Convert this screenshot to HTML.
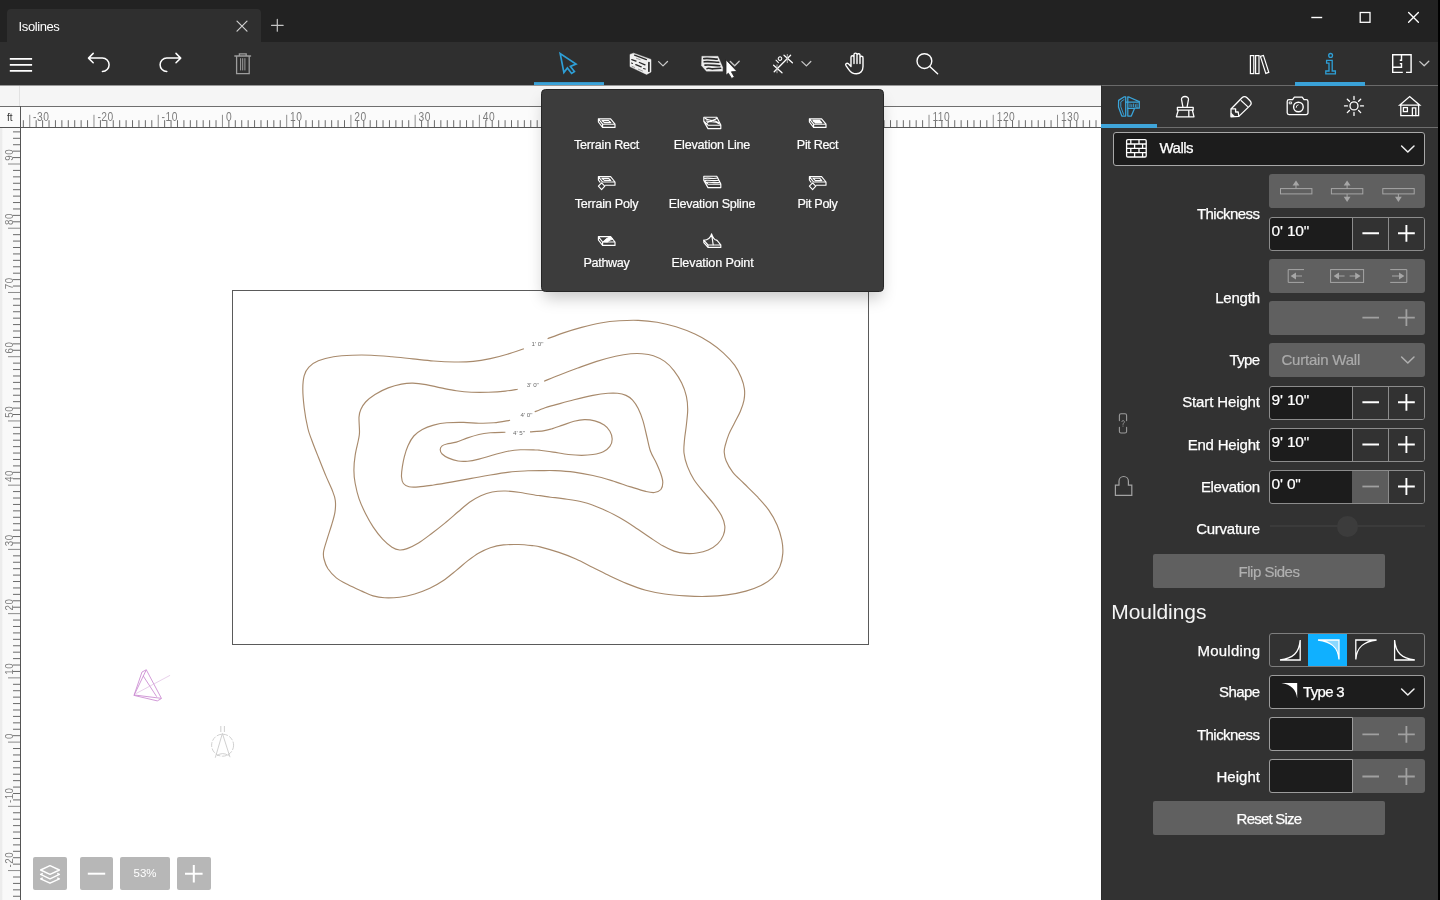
<!DOCTYPE html>
<html lang="en">
<head>
<meta charset="utf-8">
<title>Isolines</title>
<style>
*{box-sizing:border-box;margin:0;padding:0}
html,body{width:1440px;height:900px;overflow:hidden;background:#fff}
body{font-family:"Liberation Sans",sans-serif;color:#fff;position:relative;-webkit-font-smoothing:antialiased}
.abs{position:absolute}
svg{position:absolute;overflow:visible}
#titlebar{left:0;top:0;width:1440px;height:42px;background:#222222}
#tab{left:7px;top:9px;width:254px;height:34px;background:#2f2f2f;border-radius:4px 4px 0 0}
#toolbar{left:0;top:42px;width:1440px;height:43px;background:#2f2f2f}
.ico{stroke:#fff;fill:none;stroke-width:1.4;stroke-linecap:round;stroke-linejoin:round}
.icob{stroke:#2e9fd6;fill:none;stroke-width:1.4;stroke-linecap:round;stroke-linejoin:round}
#canvas{left:0;top:85px;width:1101px;height:815px;background:#fff}
#topband{left:0;top:85px;width:1101px;height:22px;border-top:1px solid #999;background:#f5f5f5;border-bottom:1px solid #6e6e6e}
#hruler{left:0;top:107px;width:1101px;height:21px;background:#fbfbfb;border-bottom:1px solid #555}
#vruler{left:0;top:85px;width:21px;height:815px;background:linear-gradient(to right,#ececec 0,#ececec 1.5px,#f9f9f9 3px);border-right:1px solid #555}
#panel{left:1101px;top:85px;width:339px;height:815px;background:#323232;border-left:1px solid #2c2c2c;border-top:1px solid #6a6a6a}
.lbl{position:absolute;right:180px;font-size:15px;line-height:18px;color:#fff;white-space:nowrap;text-align:right;-webkit-text-stroke:.25px #fff}
.fld{position:absolute;left:1269px;width:156px;height:34px;border:1px solid #8c8c8c;border-radius:3px;background:#1c1c1c;overflow:hidden}
.fld .val{position:absolute;left:1.6px;top:4px;font-size:15.5px;line-height:18px;color:#fff;letter-spacing:-.2px;-webkit-text-stroke:.2px #fff}
.fld .mb{position:absolute;top:0;width:36px;height:32px;background:#323232;border-left:1px solid #8c8c8c}
.dis{position:absolute;left:1269px;width:156px;height:34px;border-radius:3px;background:#606060}
.btn{position:absolute;left:1153px;width:232px;height:34px;border-radius:2px;background:#606060;font-size:15px;line-height:34px;text-align:center;padding-top:.6px}
.pm{stroke:#fff;stroke-width:1.9;fill:none}
.pmd{stroke:#a0a0a0;stroke-width:1.8;fill:none}
#popup{left:540.6px;top:89px;width:343.6px;height:203px;background:#3c3c3c;border-radius:4.5px;border:1px solid #262626;box-shadow:0 9px 16px -3px rgba(0,0,0,.22)}
.pi{position:absolute;width:120px;text-align:center;font-size:13px;line-height:16px;color:#fff;white-space:nowrap;-webkit-text-stroke:.2px #fff}
.zb{position:absolute;top:857px;height:33.4px;background:#b7b7b7;border-radius:2px}
</style>
</head>
<body>
<div id="root" style="position:absolute;left:0;top:0;width:1440px;height:900px;will-change:transform">
<!-- ===== title bar + toolbar ===== -->
<div id="titlebar" class="abs"></div>
<div id="tab" class="abs"></div>
<div id="toolbar" class="abs"></div>
<div class="abs" style="left:18.6px;top:19px;font-size:13px;line-height:16px;color:#fff;letter-spacing:-0.4px">Isolines</div>
<svg width="1440" height="90" style="left:0;top:0" viewBox="0 0 1440 90">
  <!-- tab close / plus -->
  <path class="ico" style="stroke-width:1.2;stroke:#d0d0d0" d="M237 21.2 L247 31.2 M247 21.2 L237 31.2"/>
  <path class="ico" style="stroke-width:1.2;stroke:#c4c4c4" d="M271.5 25.3 H283.2 M277.3 19.4 V31.2"/>
  <!-- window controls -->
  <path class="ico" style="stroke-width:1.4;stroke-linecap:butt" d="M1311.3 17.5 H1322.2"/>
  <rect class="ico" style="stroke-width:1.3;stroke-linejoin:miter" x="1360.2" y="12.5" width="9.8" height="9.8"/>
  <path class="ico" style="stroke-width:1.3" d="M1408.6 12.5 L1418.4 22.3 M1418.4 12.5 L1408.6 22.3"/>
  <!-- hamburger -->
  <path class="ico" style="stroke-width:1.8;stroke-linecap:butt" d="M9.8 58.9 H32.1 M9.8 64.95 H32.1 M9.8 70.95 H32.1"/>
  <!-- undo -->
  <path class="ico" style="stroke-width:1.5" d="M93.2 53.4 L88.5 58.1 L93.2 62.8 M88.8 58.1 H102.4 A6.7 6.7 0 0 1 102.4 71.5"/>
  <!-- redo -->
  <path class="ico" style="stroke-width:1.5" d="M176 53.4 L180.7 58.1 L176 62.8 M180.4 58.1 H166.8 A6.7 6.7 0 0 0 166.8 71.5"/>
  <!-- trash -->
  <g class="ico" style="stroke:#9d9d9d;stroke-width:1.3;stroke-linejoin:miter">
    <path d="M234.8 56 H250.6 M239.4 55.8 V53.8 H246.2 V55.8 M236.6 56.2 V73.6 H249.2 V56.2"/>
    <path d="M240.6 58.6 V70 M242.7 58.6 V70 M244.9 58.6 V70" style="stroke-width:1"/>
  </g>
  <!-- pointer (selected) -->
  <path class="icob" style="stroke-width:1.7;stroke-linejoin:miter" d="M560.2 53.6 L563.9 72.6 L567.4 68 L571.6 73.4 L574.4 71.6 L570.4 66.4 L576 64 Z"/>
  <rect x="534" y="82.1" width="70" height="3.4" fill="#3aa2d8"/>
  <!-- wall tool -->
  <path d="M630 54.4 L633.6 53.2 L651 59.4 V72 L646.6 74.4 L630 66.6 Z" fill="#efefef" stroke="#efefef" stroke-width="0.5" stroke-linejoin="round"/>
  <g fill="none" stroke="#2a2a2a" stroke-width="1.35" stroke-linecap="round">
    <path d="M634.6 55.2 L646.4 59.6"/>
    <path d="M648.9 62.6 V71.2" stroke-width="1.7"/>
    <path d="M631.8 59.6 L636 61.1 M639.4 62.5 L645 64.8 M635.8 64.7 L641.2 66.8"/>
    <path d="M631.5 63 L632.6 63.4 M643.6 68.5 L645.2 69.1" stroke-width="1.1"/>
    <path d="M636.4 58.3 L640.2 59.7 M632 66.3 L634.6 67.4 M638.4 69.2 L642.6 71" stroke="#8a8a8a" stroke-width="0.8"/>
  </g>
  <path class="ico" style="stroke:#c8c8c8;stroke-width:1.3" d="M658.6 61.6 L663 65.9 L667.5 61.5"/>
  <!-- terrain tool -->
  <path d="M701.8 56.2 H718 L722.7 67.2 V71.2 H706.4 L701.4 65.6 Z" fill="#ededed" stroke="#ededed" stroke-width="0.3" stroke-linejoin="round"/>
  <g fill="none" stroke="#2a2a2a" stroke-width="1.65" stroke-linecap="round">
    <path d="M703.8 58.6 C708 58 713 58.8 717.2 59.1"/>
    <path d="M704.2 61.8 C709 61.1 714 62.1 718.8 62.3"/>
    <path d="M705 65.1 C710 64.5 715 65.6 719.8 65.7"/>
    <path d="M707 68.6 C709 67.5 711 69.4 713.4 68.8 L720.6 68.3"/>
  </g>
  <path class="ico" style="stroke:#c8c8c8;stroke-width:1.3" d="M730.3 61.5 L734.7 65.8 L739.2 61.3"/>
  <!-- dimension tool -->
  <g class="ico" style="stroke-width:1.25">
    <path d="M774.2 71.8 L790.6 55.2"/>
    <path d="M773.6 65.2 L782 72.8 M784 55.2 L792.4 62.8"/>
    <path d="M777 64.8 V72.8 M787.3 54.4 V62.6" style="stroke:#bdbdbd;stroke-width:0.9"/>
    <path d="M776 60.2 L778.4 62.6 M778.8 57.4 A1.7 1.7 0 1 1 781.2 59.8 A1.7 1.7 0 1 1 778.8 57.4" style="stroke-width:1.05"/>
  </g>
  <path class="ico" style="stroke:#c8c8c8;stroke-width:1.3" d="M801.9 61.6 L806.4 65.9 L810.8 61.5"/>
  <!-- hand -->
  <path class="ico" style="stroke-width:1.4" d="M851 66.4 V57.2 A1.5 1.5 0 0 1 854 57.2 V54.6 A1.5 1.5 0 0 1 857 54.6 V55 A1.5 1.5 0 0 1 860 55.4 V57.6 A1.5 1.5 0 0 1 863 58 V66.6 C863 71.4 860 73.8 856.4 73.8 C852.8 73.8 850.6 72.2 848.8 69.6 L846 65.6 C845 64 846.8 62.4 848.4 63.8 L851 66.4 M854 57 V63.6 M857 55 V63.6 M860 55.6 V63.6"/>
  <!-- search -->
  <circle class="ico" cx="924.4" cy="61.1" r="7.4"/>
  <path class="ico" d="M929.8 66.6 L937.6 73.8"/>
  <!-- library -->
  <g class="ico" style="stroke-width:1.2;stroke-linejoin:miter">
    <rect x="1250.4" y="55.6" width="3.4" height="18"/>
    <rect x="1255.6" y="55.6" width="3.4" height="18"/>
    <path d="M1260.4 56.4 L1263.4 55.4 L1268.8 72.4 L1265.8 73.4 Z"/>
  </g>
  <!-- info (selected) -->
  <g class="icob" style="stroke-width:1.3;stroke-linejoin:miter">
    <circle cx="1330.6" cy="55.4" r="1.9"/>
    <path d="M1326.6 60.4 H1332.2 V71 H1335.4 V73.8 H1325.8 V71 H1329 V63.2 H1326.6 Z"/>
  </g>
  <rect x="1295" y="82" width="70" height="3.4" fill="#3aa2d8"/>
  <!-- floor plan -->
  <g class="ico" style="stroke-width:1.4;stroke-linejoin:miter;stroke-linecap:butt">
    <path d="M1402.8 72.4 H1392.7 V54.8 H1411.1 V72.4 H1406"/>
    <path d="M1392.7 67.3 H1401.5 V63.6 H1399.8 M1401.5 54.8 V60.2 H1399.8"/>
  </g>
  <path class="ico" style="stroke:#c8c8c8;stroke-width:1.3" d="M1419.8 61.6 L1424.2 65.8 L1428.8 61.3"/>
</svg>
<!-- ===== canvas + rulers ===== -->
<div id="canvas" class="abs"></div>
<div id="vruler" class="abs"></div>
<div id="topband" class="abs"></div>
<div id="hruler" class="abs"></div>
<div class="abs" style="left:0;top:86px;width:20px;height:20px;background:#f5f5f5;border-right:1px solid #e2e2e2"></div>
<div class="abs" style="left:20px;top:106px;width:1px;height:794px;background:#555"></div>
<div class="abs" style="left:7px;top:111.5px;font-size:10px;line-height:12px;color:#333">ft</div>
<svg width="1101" height="815" style="left:0;top:85px" viewBox="0 85 1101 815">
<path d="M29.75 114.8V127M93.98 114.8V127M158.22 114.8V127M222.45 114.8V127M286.69 114.8V127M350.92 114.8V127M415.15 114.8V127M479.39 114.8V127M543.62 114.8V127M607.86 114.8V127M672.09 114.8V127M736.32 114.8V127M800.56 114.8V127M864.79 114.8V127M929.03 114.8V127M993.26 114.8V127M1057.49 114.8V127" stroke="#8e8e8e" stroke-width="1" fill="none"/>
<path d="M23.33 120.2V127M36.17 120.2V127M42.60 120.2V127M49.02 120.2V127M55.44 120.2V127M61.87 120.2V127M68.29 120.2V127M74.71 120.2V127M81.14 120.2V127M87.56 120.2V127M100.41 120.2V127M106.83 120.2V127M113.25 120.2V127M119.68 120.2V127M126.10 120.2V127M132.52 120.2V127M138.95 120.2V127M145.37 120.2V127M151.79 120.2V127M164.64 120.2V127M171.06 120.2V127M177.49 120.2V127M183.91 120.2V127M190.34 120.2V127M196.76 120.2V127M203.18 120.2V127M209.61 120.2V127M216.03 120.2V127M228.88 120.2V127M235.30 120.2V127M241.72 120.2V127M248.15 120.2V127M254.57 120.2V127M260.99 120.2V127M267.42 120.2V127M273.84 120.2V127M280.26 120.2V127M293.11 120.2V127M299.53 120.2V127M305.96 120.2V127M312.38 120.2V127M318.80 120.2V127M325.23 120.2V127M331.65 120.2V127M338.07 120.2V127M344.50 120.2V127M357.34 120.2V127M363.77 120.2V127M370.19 120.2V127M376.61 120.2V127M383.04 120.2V127M389.46 120.2V127M395.88 120.2V127M402.31 120.2V127M408.73 120.2V127M421.58 120.2V127M428.00 120.2V127M434.42 120.2V127M440.85 120.2V127M447.27 120.2V127M453.69 120.2V127M460.12 120.2V127M466.54 120.2V127M472.96 120.2V127M485.81 120.2V127M492.23 120.2V127M498.66 120.2V127M505.08 120.2V127M511.50 120.2V127M517.93 120.2V127M524.35 120.2V127M530.78 120.2V127M537.20 120.2V127M550.05 120.2V127M556.47 120.2V127M562.89 120.2V127M569.32 120.2V127M575.74 120.2V127M582.16 120.2V127M588.59 120.2V127M595.01 120.2V127M601.43 120.2V127M614.28 120.2V127M620.70 120.2V127M627.13 120.2V127M633.55 120.2V127M639.97 120.2V127M646.40 120.2V127M652.82 120.2V127M659.24 120.2V127M665.67 120.2V127M678.51 120.2V127M684.94 120.2V127M691.36 120.2V127M697.78 120.2V127M704.21 120.2V127M710.63 120.2V127M717.05 120.2V127M723.48 120.2V127M729.90 120.2V127M742.75 120.2V127M749.17 120.2V127M755.59 120.2V127M762.02 120.2V127M768.44 120.2V127M774.86 120.2V127M781.29 120.2V127M787.71 120.2V127M794.13 120.2V127M806.98 120.2V127M813.40 120.2V127M819.83 120.2V127M826.25 120.2V127M832.67 120.2V127M839.10 120.2V127M845.52 120.2V127M851.95 120.2V127M858.37 120.2V127M871.22 120.2V127M877.64 120.2V127M884.06 120.2V127M890.49 120.2V127M896.91 120.2V127M903.33 120.2V127M909.76 120.2V127M916.18 120.2V127M922.60 120.2V127M935.45 120.2V127M941.87 120.2V127M948.30 120.2V127M954.72 120.2V127M961.14 120.2V127M967.57 120.2V127M973.99 120.2V127M980.41 120.2V127M986.84 120.2V127M999.68 120.2V127M1006.11 120.2V127M1012.53 120.2V127M1018.95 120.2V127M1025.38 120.2V127M1031.80 120.2V127M1038.22 120.2V127M1044.65 120.2V127M1051.07 120.2V127M1063.92 120.2V127M1070.34 120.2V127M1076.76 120.2V127M1083.19 120.2V127M1089.61 120.2V127M1096.03 120.2V127" stroke="#5a5a5a" stroke-width="0.9" fill="none"/>
<path d="M8 870.57H20M8 806.34H20M8 742.11H20M8 677.87H20M8 613.64H20M8 549.40H20M8 485.17H20M8 420.94H20M8 356.70H20M8 292.47H20M8 228.23H20M8 164.00H20" stroke="#8c8c8c" stroke-width="1" fill="none"/>
<path d="M13 896.27H20M13 889.84H20M13 883.42H20M13 877.00H20M13 864.15H20M13 857.73H20M13 851.30H20M13 844.88H20M13 838.46H20M13 832.03H20M13 825.61H20M13 819.19H20M13 812.76H20M13 799.92H20M13 793.49H20M13 787.07H20M13 780.65H20M13 774.22H20M13 767.80H20M13 761.38H20M13 754.95H20M13 748.53H20M13 735.68H20M13 729.26H20M13 722.84H20M13 716.41H20M13 709.99H20M13 703.57H20M13 697.14H20M13 690.72H20M13 684.30H20M13 671.45H20M13 665.03H20M13 658.60H20M13 652.18H20M13 645.75H20M13 639.33H20M13 632.91H20M13 626.48H20M13 620.06H20M13 607.21H20M13 600.79H20M13 594.37H20M13 587.94H20M13 581.52H20M13 575.10H20M13 568.67H20M13 562.25H20M13 555.83H20M13 542.98H20M13 536.56H20M13 530.13H20M13 523.71H20M13 517.29H20M13 510.86H20M13 504.44H20M13 498.02H20M13 491.59H20M13 478.75H20M13 472.32H20M13 465.90H20M13 459.48H20M13 453.05H20M13 446.63H20M13 440.21H20M13 433.78H20M13 427.36H20M13 414.51H20M13 408.09H20M13 401.67H20M13 395.24H20M13 388.82H20M13 382.40H20M13 375.97H20M13 369.55H20M13 363.13H20M13 350.28H20M13 343.86H20M13 337.43H20M13 331.01H20M13 324.59H20M13 318.16H20M13 311.74H20M13 305.31H20M13 298.89H20M13 286.04H20M13 279.62H20M13 273.20H20M13 266.77H20M13 260.35H20M13 253.93H20M13 247.50H20M13 241.08H20M13 234.66H20M13 221.81H20M13 215.39H20M13 208.96H20M13 202.54H20M13 196.12H20M13 189.69H20M13 183.27H20M13 176.85H20M13 170.42H20M13 157.58H20M13 151.15H20M13 144.73H20M13 138.31H20M13 131.88H20" stroke="#5a5a5a" stroke-width="0.9" fill="none"/>
<g font-family="Liberation Sans, sans-serif" font-size="12.2" fill="#7c7c7c" letter-spacing="0.6">
<text transform="translate(33.1 120.6) scale(0.84 1)">-30</text>
<text transform="translate(97.4 120.6) scale(0.84 1)">-20</text>
<text transform="translate(161.6 120.6) scale(0.84 1)">-10</text>
<text transform="translate(225.9 120.6) scale(0.84 1)">0</text>
<text transform="translate(290.1 120.6) scale(0.84 1)">10</text>
<text transform="translate(354.3 120.6) scale(0.84 1)">20</text>
<text transform="translate(418.6 120.6) scale(0.84 1)">30</text>
<text transform="translate(482.8 120.6) scale(0.84 1)">40</text>
<text transform="translate(547.0 120.6) scale(0.84 1)">50</text>
<text transform="translate(932.4 120.6) scale(0.84 1)">110</text>
<text transform="translate(996.7 120.6) scale(0.84 1)">120</text>
<text transform="translate(1060.9 120.6) scale(0.84 1)">130</text>
<text font-size="10.8" transform="translate(13.2 867.4) rotate(-90) scale(0.9 1)">-20</text>
<text font-size="10.8" transform="translate(13.2 803.1) rotate(-90) scale(0.9 1)">-10</text>
<text font-size="10.8" transform="translate(13.2 738.9) rotate(-90) scale(0.9 1)">0</text>
<text font-size="10.8" transform="translate(13.2 674.7) rotate(-90) scale(0.9 1)">10</text>
<text font-size="10.8" transform="translate(13.2 610.4) rotate(-90) scale(0.9 1)">20</text>
<text font-size="10.8" transform="translate(13.2 546.2) rotate(-90) scale(0.9 1)">30</text>
<text font-size="10.8" transform="translate(13.2 482.0) rotate(-90) scale(0.9 1)">40</text>
<text font-size="10.8" transform="translate(13.2 417.7) rotate(-90) scale(0.9 1)">50</text>
<text font-size="10.8" transform="translate(13.2 353.5) rotate(-90) scale(0.9 1)">60</text>
<text font-size="10.8" transform="translate(13.2 289.3) rotate(-90) scale(0.9 1)">70</text>
<text font-size="10.8" transform="translate(13.2 225.0) rotate(-90) scale(0.9 1)">80</text>
<text font-size="10.8" transform="translate(13.2 160.8) rotate(-90) scale(0.9 1)">90</text>
</g>
<rect x="232.5" y="290.5" width="636" height="354" fill="#fff" stroke="#5a5a5a" stroke-width="1"/>
<path d="M547.6 338.7 C550.1 337.8 557.0 335.0 562.7 333.1 C568.4 331.2 575.3 329.1 581.6 327.4 C587.9 325.7 594.2 324.1 600.5 323.0 C606.8 321.9 613.1 321.2 619.4 320.8 C625.7 320.4 631.9 320.1 638.2 320.4 C644.5 320.6 650.8 321.2 657.1 322.3 C663.4 323.4 669.7 324.9 676.0 326.8 C682.3 328.8 689.2 331.4 694.9 334.0 C700.6 336.6 705.3 339.4 710.0 342.5 C714.7 345.6 719.2 349.1 723.3 352.9 C727.4 356.7 731.6 361.1 734.6 365.2 C737.6 369.3 739.6 373.6 741.2 377.5 C742.8 381.4 743.9 385.0 744.4 388.8 C744.9 392.6 744.7 396.3 744.0 400.1 C743.3 403.9 741.9 407.7 740.3 411.5 C738.7 415.3 736.5 419.0 734.6 422.8 C732.7 426.6 730.5 430.3 728.9 434.1 C727.3 437.9 726.0 442.5 725.2 445.5 C724.4 448.5 724.1 449.4 724.2 452.0 C724.4 454.6 724.7 457.4 726.1 460.8 C727.5 464.2 729.7 468.3 732.7 472.1 C735.7 475.9 739.9 479.4 744.0 483.5 C748.1 487.6 753.2 492.3 757.3 496.7 C761.4 501.1 765.3 505.2 768.6 509.9 C771.9 514.6 774.9 520.0 777.1 525.0 C779.3 530.0 780.8 535.4 781.8 540.1 C782.8 544.8 783.1 549.0 782.8 553.4 C782.5 557.8 781.6 562.5 779.9 566.6 C778.2 570.7 775.5 574.8 772.4 577.9 C769.2 581.0 765.4 583.3 761.0 585.5 C756.6 587.7 751.6 589.5 745.9 591.1 C740.2 592.7 733.6 594.0 727.0 594.9 C720.4 595.8 713.2 596.2 706.3 596.4 C699.4 596.6 692.4 596.3 685.5 595.9 C678.6 595.5 671.3 595.0 664.7 594.0 C658.1 593.0 652.1 591.9 645.8 590.2 C639.5 588.5 632.9 586.0 626.9 583.6 C620.9 581.2 615.6 578.7 609.9 576.0 C604.2 573.3 598.6 570.3 592.9 567.5 C587.2 564.7 581.6 561.5 575.9 559.0 C570.2 556.5 564.9 554.4 558.9 552.4 C552.9 550.4 544.2 548.0 540.0 546.9 C535.8 545.8 537.3 546.2 533.7 545.8 C530.1 545.4 523.6 544.6 518.6 544.5 C513.6 544.4 508.2 544.4 503.5 544.9 C498.8 545.4 494.4 546.4 490.3 547.7 C486.2 549.1 482.7 550.8 478.9 553.0 C475.1 555.2 471.4 558.0 467.6 560.9 C463.8 563.8 460.4 567.1 456.3 570.4 C452.2 573.7 447.4 577.8 443.0 580.8 C438.6 583.8 434.5 586.1 429.8 588.3 C425.1 590.5 419.7 592.5 414.7 594.0 C409.7 595.5 404.6 596.6 399.6 597.2 C394.6 597.8 388.9 598.0 384.5 597.8 C380.1 597.6 376.9 597.0 373.1 595.9 C369.3 594.8 365.9 592.9 361.8 591.1 C357.7 589.3 352.9 587.3 348.6 585.1 C344.4 582.9 339.8 580.7 336.3 577.9 C332.8 575.1 329.9 571.6 327.8 568.5 C325.8 565.4 324.7 561.8 324.0 559.0 C323.3 556.2 323.1 554.6 323.6 551.5 C324.1 548.4 325.5 544.5 326.8 540.1 C328.1 535.7 330.2 529.7 331.6 525.0 C333.0 520.3 334.4 515.9 335.0 511.8 C335.6 507.7 335.7 504.0 335.3 500.5 C334.9 497.0 334.1 495.1 332.5 491.0 C330.9 486.9 328.3 481.6 325.9 475.9 C323.5 470.2 320.7 463.0 318.3 457.0 C315.9 451.0 313.4 444.8 311.7 440.0 C310.0 435.2 309.1 433.9 307.9 428.5 C306.6 423.1 305.0 414.3 304.2 407.7 C303.4 401.1 302.8 394.1 302.8 388.8 C302.8 383.5 303.2 379.2 304.2 375.6 C305.2 372.0 306.5 369.6 308.9 367.1 C311.2 364.6 314.2 362.5 318.3 360.8 C322.4 359.1 327.8 357.6 333.5 356.7 C339.2 355.8 346.0 355.4 352.3 355.2 C358.6 354.9 364.6 354.9 371.2 355.2 C377.8 355.4 385.1 356.1 392.0 356.7 C398.9 357.3 405.9 358.2 412.8 358.9 C419.7 359.6 426.7 360.5 433.6 361.0 C440.5 361.5 447.8 361.9 454.4 362.0 C461.0 362.1 467.3 362.0 473.3 361.4 C479.3 360.8 484.6 359.8 490.3 358.6 C496.0 357.4 501.7 355.9 507.3 354.2 C512.9 352.5 521.1 349.6 523.9 348.7" fill="none" stroke="#a88a6c" stroke-width="1.15"/>
<path d="M544.1 381.2 C546.6 380.2 553.3 377.4 558.9 375.2 C564.5 373.0 571.5 370.3 577.8 368.0 C584.1 365.7 590.4 363.3 596.7 361.4 C603.0 359.4 609.9 357.6 615.6 356.3 C621.3 355.0 626.3 354.2 630.7 353.8 C635.1 353.4 638.2 353.4 642.0 353.7 C645.8 354.0 649.6 354.4 653.4 355.7 C657.2 357.0 661.2 358.9 664.7 361.4 C668.2 363.9 671.3 367.2 674.1 370.8 C676.9 374.4 679.7 378.8 681.7 383.1 C683.8 387.4 685.4 392.0 686.4 396.4 C687.4 400.8 687.7 404.9 687.7 409.6 C687.7 414.3 686.9 419.7 686.4 424.7 C685.9 429.7 684.9 435.1 684.5 439.8 C684.1 444.5 683.5 448.6 684.0 453.0 C684.5 457.4 685.7 461.9 687.4 466.4 C689.1 470.8 691.2 475.3 694.0 479.7 C696.8 484.1 701.1 488.8 704.4 492.9 C707.7 497.0 711.0 500.4 713.8 504.2 C716.6 508.0 719.6 512.0 721.4 515.6 C723.2 519.2 724.5 522.7 724.8 526.0 C725.1 529.3 724.5 532.4 723.3 535.4 C722.1 538.4 720.1 541.5 717.6 543.9 C715.1 546.3 711.7 548.5 708.2 550.0 C704.7 551.5 700.6 552.4 696.8 553.0 C693.0 553.6 689.3 553.7 685.5 553.4 C681.7 553.1 677.9 552.4 674.1 551.1 C670.3 549.8 666.9 548.1 662.8 545.8 C658.7 543.5 654.3 540.4 649.6 537.3 C644.9 534.1 639.5 530.2 634.5 526.9 C629.5 523.6 624.8 520.5 619.4 517.5 C614.0 514.5 608.3 511.5 602.3 509.0 C596.3 506.5 590.1 504.0 583.5 502.3 C576.9 500.6 568.2 499.5 562.7 498.6 C557.2 497.8 554.5 497.7 550.7 497.2 C546.9 496.7 542.5 495.9 540.0 495.6 C537.5 495.3 538.9 495.7 535.6 495.2 C532.4 494.7 525.5 493.2 520.5 492.5 C515.5 491.8 510.1 491.1 505.4 491.0 C500.7 490.9 496.3 491.2 492.2 492.0 C488.1 492.8 484.6 494.0 480.8 495.7 C477.0 497.4 473.3 499.6 469.5 502.3 C465.7 505.0 462.2 508.3 458.1 511.8 C454.0 515.3 449.3 519.5 444.9 523.1 C440.5 526.7 436.1 530.2 431.7 533.5 C427.3 536.8 422.6 540.5 418.5 543.0 C414.4 545.5 410.2 547.4 407.1 548.6 C404.0 549.8 402.1 550.2 399.6 550.0 C397.1 549.8 394.8 549.1 392.0 547.3 C389.2 545.5 385.8 542.6 382.6 539.2 C379.5 535.8 375.9 531.1 373.1 526.9 C370.3 522.6 368.0 518.4 365.6 513.7 C363.2 509.0 360.7 503.6 359.0 498.6 C357.3 493.6 356.1 488.2 355.2 483.5 C354.3 478.8 353.9 474.9 353.9 470.2 C353.9 465.5 354.4 460.1 355.2 455.1 C355.9 450.1 357.7 443.8 358.4 440.0 C359.1 436.2 359.4 436.0 359.5 432.2 C359.6 428.4 358.8 420.9 359.0 417.1 C359.2 413.3 359.7 412.1 360.8 409.6 C361.9 407.1 363.2 404.5 365.6 402.0 C368.0 399.5 371.2 396.9 375.0 394.5 C378.8 392.1 383.8 389.6 388.2 387.9 C392.6 386.2 397.4 384.9 401.5 384.1 C405.6 383.3 408.7 383.0 412.8 383.1 C416.9 383.2 421.3 383.8 426.0 384.6 C430.7 385.4 436.1 386.9 441.1 387.9 C446.2 388.9 451.2 390.0 456.3 390.7 C461.4 391.4 466.0 391.9 471.4 392.2 C476.8 392.4 482.7 392.4 488.4 392.2 C494.1 392.0 500.5 391.6 505.4 391.1 C510.3 390.6 515.7 389.5 517.7 389.2" fill="none" stroke="#a88a6c" stroke-width="1.15"/>
<path d="M534.7 411.8 C536.4 411.1 541.7 408.9 545.1 407.7 C548.5 406.5 550.3 406.2 555.1 404.9 C559.9 403.6 567.7 401.4 574.0 399.8 C580.3 398.2 587.2 396.5 592.9 395.4 C598.6 394.3 603.9 393.6 608.0 393.3 C612.1 393.0 614.5 393.0 617.5 393.3 C620.5 393.6 623.5 394.3 626.0 395.4 C628.5 396.5 630.6 397.9 632.6 400.1 C634.6 402.3 636.5 405.1 638.2 408.6 C639.9 412.1 641.6 416.3 643.0 420.9 C644.4 425.5 645.5 430.9 646.7 436.0 C648.0 441.1 648.9 446.9 650.5 451.3 C652.1 455.8 654.5 458.9 656.2 462.7 C657.9 466.5 659.8 470.7 660.9 474.0 C662.0 477.3 662.8 479.9 662.8 482.5 C662.8 485.1 662.3 487.8 660.9 489.5 C659.5 491.2 656.8 492.2 654.3 492.5 C651.8 492.8 649.7 492.3 645.8 491.4 C641.9 490.5 636.4 488.7 630.7 486.9 C625.0 485.1 618.1 482.5 611.8 480.6 C605.5 478.7 599.2 476.9 592.9 475.5 C586.6 474.1 580.3 472.9 574.0 472.1 C567.7 471.3 560.8 470.9 555.1 470.6 C549.4 470.4 544.5 470.6 540.0 470.6 C535.5 470.6 533.1 470.6 528.0 470.8 C522.9 471.1 515.5 471.4 509.2 472.1 C502.9 472.8 496.6 473.9 490.3 475.0 C484.0 476.1 477.7 477.2 471.4 478.4 C465.1 479.5 458.8 480.8 452.5 481.9 C446.2 483.0 439.3 484.2 433.6 485.0 C427.9 485.8 422.6 486.6 418.5 486.9 C414.4 487.2 411.5 487.3 409.0 486.7 C406.5 486.1 404.6 485.1 403.4 483.5 C402.1 481.9 401.7 479.7 401.5 476.8 C401.3 473.9 401.9 469.7 402.4 466.4 C402.9 463.1 403.4 460.3 404.3 456.8 C405.2 453.3 406.5 449.0 408.1 445.5 C409.7 442.0 411.4 438.7 413.8 436.0 C416.2 433.3 419.0 431.2 422.3 429.4 C425.6 427.6 429.5 426.2 433.6 425.1 C437.7 424.0 441.8 423.2 446.8 422.8 C451.8 422.4 458.5 422.3 463.8 422.4 C469.1 422.5 473.9 423.1 478.9 423.2 C483.9 423.3 488.8 423.3 494.0 422.8 C499.2 422.3 507.4 420.7 510.1 420.3" fill="none" stroke="#a88a6c" stroke-width="1.15"/>
<path d="M530.0 431.9 C532.2 431.7 539.7 431.4 543.2 430.9 C546.8 430.4 548.0 430.0 551.3 429.0 C554.5 428.0 558.9 426.4 562.7 425.1 C566.5 423.8 570.4 422.2 574.0 421.3 C577.6 420.4 580.9 419.7 584.4 419.6 C587.9 419.5 591.5 420.0 594.8 420.9 C598.1 421.8 601.7 423.4 604.2 425.1 C606.7 426.8 608.6 429.0 609.9 431.3 C611.2 433.6 612.2 436.4 612.2 438.9 C612.2 441.4 611.4 444.3 609.9 446.4 C608.4 448.5 606.1 450.3 603.3 451.7 C600.5 453.1 596.5 453.9 592.9 454.5 C589.3 455.1 585.7 455.3 581.6 455.3 C577.5 455.3 573.0 455.0 568.3 454.5 C563.6 454.0 557.9 452.8 553.2 452.1 C548.5 451.4 542.9 450.7 540.0 450.3 C537.1 449.9 538.9 450.1 535.6 450.0 C532.4 449.9 525.5 449.5 520.5 449.8 C515.5 450.1 510.1 450.8 505.4 451.7 C500.7 452.6 496.6 454.1 492.2 455.3 C487.8 456.5 483.0 458.1 478.9 459.1 C474.8 460.1 471.1 460.9 467.6 461.2 C464.1 461.5 461.2 461.5 458.1 461.0 C455.0 460.5 451.4 459.3 448.7 458.1 C446.0 456.9 443.5 455.4 442.1 454.0 C440.7 452.6 440.2 451.0 440.2 449.6 C440.2 448.2 441.0 446.8 442.1 445.9 C443.2 445.0 444.4 444.6 446.8 444.0 C449.2 443.4 452.8 443.1 456.3 442.1 C459.8 441.1 463.8 439.2 467.6 437.9 C471.4 436.6 475.1 435.4 478.9 434.5 C482.7 433.6 485.9 433.2 490.3 432.8 C494.7 432.4 502.9 432.4 505.4 432.3" fill="none" stroke="#a88a6c" stroke-width="1.15"/>
<g font-family="Liberation Sans, sans-serif" font-size="6.2" fill="#6a6a6a" text-anchor="middle">
<text x="537.5" y="346.0">1' 0&quot;</text>
<text x="532.8" y="387.2">3' 0&quot;</text>
<text x="526.5" y="417.4">4' 0&quot;</text>
<text x="519.0" y="434.5">4' 5&quot;</text>
</g>
<g fill="none" stroke="#c47ccc" stroke-width="0.9" stroke-linejoin="round" opacity="0.85">
<path d="M146.3 669.8 L134 695.4 L157.3 700.9 L161.5 698.5 Z M146.3 669.8 L142 672 L134 695.4 M143.2 675.9 L156.7 696.7 M134.5 695 L161 698.3" />
<path d="M135.9 693.6 L170.1 675.3" stroke="#d9b0dc" stroke-width="0.7"/>
</g>
<g fill="none" stroke="#c4c4c4" stroke-width="0.8">
<circle cx="222.6" cy="745.2" r="11" stroke-dasharray="5 1.5"/>
<path d="M215.3 757.7 L222.4 733.4 L230 757.2 M217 755.6 Q222.6 751.6 228.6 755.6 M220.8 726 V732 M224.4 726 V732"/>
</g>
</svg>
<div class="zb" style="left:33px;width:34px"></div>
<div class="zb" style="left:80px;width:33px"></div>
<div class="zb" style="left:120px;width:50px;font-size:11.5px;line-height:33.4px;text-align:center;color:#fff">53%</div>
<div class="zb" style="left:177px;width:33.5px"></div>
<svg width="220" height="40" style="left:0;top:855px" viewBox="0 855 220 40">
<g fill="none" stroke="#fff" stroke-width="1.4" stroke-linejoin="round">
<path d="M50 865.6 L59.4 870 L50 874.4 L40.6 870 Z"/>
<path d="M42.8 873.4 L40.6 874.4 L50 878.8 L59.4 874.4 L57.2 873.4"/>
<path d="M42.8 877.8 L40.6 878.8 L50 883.2 L59.4 878.8 L57.2 877.8"/>
<path d="M87.8 873.7 H105.2" stroke-width="2"/>
<path d="M185 873.7 H202.6 M193.8 864.9 V882.5" stroke-width="2"/>
</g></svg>
<!-- ===== right inspector panel ===== -->
<div id="panel" class="abs"></div>
<div class="abs" style="left:1438.2px;top:0;width:1.8px;height:900px;background:#000"></div>
<div class="abs" style="left:1102px;top:127px;width:336px;height:1px;background:#6e6e6e"></div>
<div class="abs" style="left:1101.4px;top:124.2px;width:55.6px;height:3.6px;background:#3fa5da"></div>
<div class="abs" style="left:1295px;top:82px;width:70px;height:4px;background:#3aa2d8"></div>
<svg width="340" height="44" style="left:1100px;top:85px" viewBox="1100 85 340 44">
  <!-- caliper (selected) -->
  <g class="icob" style="stroke-width:1.25;stroke-linejoin:round;stroke:#3aa6dc">
    <path d="M1125.7 96.8 H1124.3 L1118.6 100.4 L1118.5 107 L1121.8 116 H1125.7 Z"/>
    <path d="M1124 99.6 L1120.8 101.8 V106.8 L1123.6 114.4" style="stroke-width:0.9"/>
    <path d="M1127.8 96.8 L1129.4 97.2 L1138.6 101.4 H1139.3 V108.2 H1134.6 L1131.3 116 H1127.8 Z"/>
    <path d="M1125.7 102.1 H1138.4 M1127.8 108.4 H1134.4" />
    <path d="M1130 104 V106.8 M1131.8 104.6 V106.8 M1133.6 104 V106.8 M1135.4 104.6 V106.8 M1137 104 V108" style="stroke-width:0.9"/>
  </g>
  <!-- stamp / brush -->
  <g class="ico" style="stroke-width:1.3">
    <path d="M1182.9 107 L1181.5 99.4 C1181.2 95.5 1188.8 95.5 1188.5 99.4 L1187.1 107"/>
    <path d="M1177.4 107.3 H1193.2 V110.2 H1177.4 Z"/>
    <path d="M1178.2 110.4 L1176.4 116.8 H1194 L1192.4 110.4 M1188.8 110.6 V116.8"/>
  </g>
  <!-- pencil -->
  <g class="ico" style="stroke-width:1.3">
    <path d="M1231 116.8 V109 L1242 97.8 C1243.6 96.2 1245.4 96.2 1247 97.8 L1250 100.8 C1251.6 102.4 1251.6 104 1250 105.6 L1238.8 116.4 Z"/>
    <path d="M1241.2 100.6 L1247.4 106.4 M1231.4 108.8 H1235.6 V112 H1238.2 L1238.8 116"/>
    <path d="M1231.6 113.4 L1234.6 116.4 L1231.6 116.4 Z" fill="#fff" stroke-width="0.8"/>
  </g>
  <!-- camera -->
  <g class="ico" style="stroke-width:1.3">
    <path d="M1289 99.6 H1292.6 L1294.4 97.2 H1302.2 L1304 99.6 H1306.2 A1.8 1.8 0 0 1 1308 101.4 V112.8 A1.8 1.8 0 0 1 1306.2 114.6 H1289 A1.8 1.8 0 0 1 1287.2 112.8 V101.4 A1.8 1.8 0 0 1 1289 99.6 Z"/>
    <circle cx="1298.4" cy="107" r="4.8" style="stroke-width:1.4"/>
    <path d="M1296.2 107.4 A2.4 2.4 0 0 1 1298.2 104.8" style="stroke-width:0.9"/>
    <rect x="1289.6" y="102" width="2" height="1.8" style="stroke-width:0.9"/>
  </g>
  <!-- sun -->
  <g class="ico" style="stroke-width:1.3">
    <circle cx="1354" cy="105.9" r="4"/>
    <path d="M1354 96.4 V99.4 M1354 112.4 V115.4 M1344.5 105.9 H1347.5 M1360.5 105.9 H1363.5 M1347.3 99.2 L1349.4 101.3 M1358.6 110.5 L1360.7 112.6 M1360.7 99.2 L1358.6 101.3 M1349.4 110.5 L1347.3 112.6"/>
  </g>
  <!-- house -->
  <g class="ico" style="stroke-width:1.3;stroke-linejoin:miter">
    <path d="M1399.6 105.2 L1409.7 96.6 L1419.8 105.2 Z"/>
    <path d="M1400.8 105.4 V115.6 H1418.6 V105.4"/>
    <rect x="1403.4" y="107.6" width="4" height="4"/>
    <path d="M1412.4 115.6 V107.8 H1415.8 V115.6"/>
  </g>
</svg>

<!-- Walls dropdown -->
<div class="abs" style="left:1113px;top:132px;width:312px;height:34px;border:1px solid #a8a8a8;border-radius:3px;background:#1c1c1c"></div>
<div class="abs" style="left:1159.5px;top:139.3px;font-size:15px;line-height:18px;letter-spacing:-.52px;-webkit-text-stroke:.25px #fff">Walls</div>
<svg width="340" height="40" style="left:1100px;top:130px" viewBox="1100 130 340 40">
  <g class="ico" style="stroke-width:1.3;stroke-linejoin:miter;stroke-linecap:butt">
    <rect x="1126.6" y="139.6" width="19.6" height="17.4" rx="1.2"/>
    <path d="M1126.6 144 H1146.2 M1126.6 148.3 H1146.2 M1126.6 152.7 H1146.2 M1130.8 139.6 V144 M1139 139.6 V144 M1134.6 144 V148.3 M1142.6 144 V148.3 M1130.8 148.3 V152.7 M1139 148.3 V152.7 M1134.6 152.7 V157 M1142.6 152.7 V157"/>
  </g>
  <path class="ico" style="stroke-width:1.5;stroke:#f0f0f0" d="M1401.6 146 L1407.8 152 L1414 146"/>
</svg>

<!-- Thickness -->
<div class="dis" style="top:174px"></div>
<div class="lbl" style="top:204.8px;font-size:15px;letter-spacing:-0.56px;margin-right:0.56px">Thickness</div>
<div class="fld" style="top:216.5px"><span class="val">0' 10"</span><div class="mb" style="left:82px"></div><div class="mb" style="left:118px"></div></div>
<!-- Length -->
<div class="dis" style="top:259px"></div>
<div class="lbl" style="top:288.5px;font-size:15px;letter-spacing:-0.20px;margin-right:0.20px">Length</div>
<div class="dis" style="top:301px"></div>
<!-- Type -->
<div class="lbl" style="top:351.3px;font-size:15px;letter-spacing:-0.70px;margin-right:0.70px">Type</div>
<div class="dis" style="top:343px"></div>
<div class="abs" style="left:1281.5px;top:350.8px;font-size:15px;line-height:18px;color:#ababab;-webkit-text-stroke:.2px #ababab;letter-spacing:-.22px">Curtain Wall</div>
<!-- Start / End / Elevation -->
<div class="lbl" style="top:393.3px;font-size:15px;letter-spacing:-0.12px;margin-right:0.12px">Start Height</div>
<div class="fld" style="top:385.5px"><span class="val">9' 10"</span><div class="mb" style="left:82px"></div><div class="mb" style="left:118px"></div></div>
<div class="lbl" style="top:435.5px;font-size:15px;letter-spacing:-0.21px;margin-right:0.21px">End Height</div>
<div class="fld" style="top:427.5px"><span class="val">9' 10"</span><div class="mb" style="left:82px"></div><div class="mb" style="left:118px"></div></div>
<div class="lbl" style="top:477.7px;font-size:15px;letter-spacing:-0.33px;margin-right:0.33px">Elevation</div>
<div class="fld" style="top:469.5px"><span class="val">0' 0"</span><div class="mb" style="left:82px;background:#5c5c5c;border-left-color:#5c5c5c"></div><div class="mb" style="left:118px"></div></div>
<!-- Curvature -->
<div class="lbl" style="top:520.4px;font-size:15px;letter-spacing:-0.25px;margin-right:0.25px">Curvature</div>
<div class="abs" style="left:1270px;top:525.4px;width:154.6px;height:2px;background:#3b3b3b"></div>
<div class="abs" style="left:1337px;top:516.2px;width:20.6px;height:20.6px;border-radius:10.3px;background:#3c3c3c"></div>
<!-- Flip sides -->
<div class="btn" style="top:554px;color:#b0b0b0;-webkit-text-stroke:.2px #b0b0b0;font-size:15px;letter-spacing:-.5px">Flip Sides</div>
<!-- Mouldings -->
<div class="abs" style="left:1111.3px;top:600px;font-size:21px;line-height:24px;letter-spacing:-.08px;color:#f4f4f4">Mouldings</div>
<div class="lbl" style="top:642.1px;font-size:15px;letter-spacing:0.24px;margin-right:-0.24px">Moulding</div>
<div class="abs" style="left:1269px;top:633px;width:156px;height:34px;border:1px solid #7e7e7e;border-radius:3px;background:#323232"></div>
<div class="abs" style="left:1308px;top:634px;width:39.2px;height:32px;background:#10b0ff"></div>
<div class="lbl" style="top:683.3px;font-size:15px;letter-spacing:-0.62px;margin-right:0.62px">Shape</div>
<div class="abs" style="left:1269px;top:675px;width:156px;height:34px;border:1px solid #9c9c9c;border-radius:3px;background:#1c1c1c"></div>
<div class="abs" style="left:1303px;top:682.8px;font-size:15px;line-height:18px;letter-spacing:-.67px;-webkit-text-stroke:.25px #fff">Type 3</div>
<div class="lbl" style="top:725.5px;font-size:15px;letter-spacing:-0.56px;margin-right:0.56px">Thickness</div>
<div class="dis" style="top:717.2px"></div>
<div class="abs" style="left:1269px;top:717.2px;width:84px;height:34px;border:1px solid #9c9c9c;border-radius:3px 0 0 3px;background:#1c1c1c"></div>
<div class="lbl" style="top:767.7px;font-size:15px;letter-spacing:0.03px;margin-right:-0.03px">Height</div>
<div class="dis" style="top:759.2px"></div>
<div class="abs" style="left:1269px;top:759.2px;width:84px;height:34px;border:1px solid #9c9c9c;border-radius:3px 0 0 3px;background:#1c1c1c"></div>
<div class="btn" style="top:801px;color:#fff;-webkit-text-stroke:.25px #fff;font-size:15px;letter-spacing:-.77px">Reset Size</div>

<!-- glyphs over the panel widgets -->
<svg width="340" height="815" style="left:1100px;top:85px" viewBox="1100 85 340 815">
  <!-- thickness alignment icons (disabled) -->
  <g fill="none" stroke="#a6a6a6" stroke-width="1">
    <rect x="1280.5" y="188.6" width="31.4" height="5.3"/>
    <rect x="1331.4" y="188.6" width="31.4" height="5.3"/>
    <rect x="1382.8" y="188.6" width="31.4" height="5.3"/>
    <path d="M1296 185 V188.6 M1347.1 185 V188.6 M1347.1 194 V197.4 M1398.4 194 V197.4"/>
  </g>
  <g fill="#a6a6a6">
    <path d="M1296 180.4 L1299.4 185.6 H1292.6 Z M1347.1 180.4 L1350.5 185.6 H1343.7 Z M1347.1 202 L1350.5 196.8 H1343.7 Z M1398.4 202 L1401.8 196.8 H1395 Z"/>
  </g>
  <!-- length icons (disabled) -->
  <g fill="none" stroke="#a6a6a6" stroke-width="1">
    <path d="M1304 269.6 H1288.2 V282.4 H1304"/>
    <path d="M1294 276 H1302"/>
    <rect x="1330.6" y="269.6" width="33" height="12.8"/>
    <path d="M1338 276 H1344.6 M1349.6 276 H1356"/>
    <path d="M1390.2 269.6 H1406.8 V282.4 H1390.2"/>
    <path d="M1392 276 H1400"/>
  </g>
  <g fill="#a6a6a6">
    <path d="M1290.6 276 L1296 272.6 V279.4 Z M1333.6 276 L1339 272.6 V279.4 Z M1360.6 276 L1355.2 272.6 V279.4 Z M1404.4 276 L1399 272.6 V279.4 Z"/>
  </g>
  <!-- minus/plus : thickness -->
  <path class="pm" d="M1362.4 233.3 H1379 M1398 233.3 H1414.8 M1406.4 224.9 V241.7"/>
  <!-- length disabled -->
  <path class="pmd" d="M1362.4 317.7 H1379 M1398 317.7 H1414.8 M1406.4 309.3 V326.1"/>
  <!-- type chevron -->
  <path d="M1401.6 357 L1407.8 363 L1414 357" fill="none" stroke="#b0b0b0" stroke-width="1.5" stroke-linecap="round" stroke-linejoin="round"/>
  <!-- start / end / elevation -->
  <path class="pm" d="M1362.4 402.3 H1379 M1398 402.3 H1414.8 M1406.4 393.9 V410.7"/>
  <path class="pm" d="M1362.4 444.5 H1379 M1398 444.5 H1414.8 M1406.4 436.1 V452.9"/>
  <path class="pmd" d="M1362.4 486.5 H1379"/>
  <path class="pm" d="M1398 486.5 H1414.8 M1406.4 478.1 V494.9"/>
  <!-- chain + lock -->
  <g fill="none" stroke="#9a9a9a" stroke-width="1.1" stroke-linecap="round">
    <path d="M1119.4 420.6 V415.4 A1.6 1.6 0 0 1 1121 413.8 H1125 A1.6 1.6 0 0 1 1126.6 415.4 V420.6"/>
    <path d="M1119.4 427.2 V431.4 A1.6 1.6 0 0 0 1121 433 H1125 A1.6 1.6 0 0 0 1126.6 431.4 V427.2"/>
    <path d="M1121.8 421.6 C1122 420.2 1124.4 420.2 1124.4 421.8 C1124.4 423 1123 423 1123 424.4 M1123 426 V426.2" stroke-width="0.9"/>
    <path d="M1115.4 495.4 V485.2 H1119 V481.2 A4.7 4.7 0 0 1 1128.4 481.2 V485.2 H1131.8 V495.4 Z" stroke="#a2a2a2" stroke-width="1.2"/>
  </g>
  <!-- moulding icons -->
  <g fill="#262626" stroke="#fff" stroke-width="1.3" stroke-linejoin="miter">
    <path d="M1280 660 C1293 658.5 1299.2 653 1300.2 640 V660 Z"/>
    <path d="M1376.6 640 C1363.6 641.5 1356.8 647 1355.8 659.4 V640 Z"/>
    <path d="M1394.6 640 C1395.6 653 1401.8 658.5 1414.8 660 H1394.6 Z"/>
  </g>
  <path d="M1318 640 C1331 641.5 1338 647 1339 659.4 V640 Z" fill="#8ad8ff" stroke="#fff" stroke-width="1.3"/>
  <!-- shape icon + chevron -->
  <path d="M1281.4 683 H1297.2 V698.2 C1296.2 689.6 1291 684.6 1281.4 683 Z" fill="#fff"/>
  <path class="ico" style="stroke-width:1.5;stroke:#f0f0f0" d="M1401.6 689 L1407.8 695 L1414 689"/>
  <!-- moulding thickness / height disabled -->
  <path class="pmd" d="M1362.4 734.3 H1379 M1398 734.3 H1414.8 M1406.4 725.9 V742.7"/>
  <path class="pmd" d="M1362.4 776.5 H1379 M1398 776.5 H1414.8 M1406.4 768.1 V784.9"/>
</svg>
<!-- ===== terrain tools popup ===== -->
<div id="popup" class="abs"></div>
<div class="pi" style="left:546.6px;top:136.5px;font-size:12.6px;letter-spacing:-.23px">Terrain Rect</div>
<div class="pi" style="left:652px;top:136.5px;font-size:12.6px;letter-spacing:-.2px">Elevation Line</div>
<div class="pi" style="left:757.5px;top:136.5px;font-size:12.6px;letter-spacing:-.35px">Pit Rect</div>
<div class="pi" style="left:546.5px;top:195.7px;font-size:12.6px;letter-spacing:-.23px">Terrain Poly</div>
<div class="pi" style="left:652px;top:195.7px;font-size:12.6px;letter-spacing:-.25px">Elevation Spline</div>
<div class="pi" style="left:757.5px;top:195.7px;font-size:12.6px;letter-spacing:-.35px">Pit Poly</div>
<div class="pi" style="left:546.5px;top:254.8px;font-size:12.6px;letter-spacing:-.35px">Pathway</div>
<div class="pi" style="left:652.5px;top:254.8px;font-size:12.6px;letter-spacing:-.12px">Elevation Point</div>
<svg width="344" height="203" style="left:540px;top:89px" viewBox="540 89 344 203">
  <g fill="none" stroke="#fff" stroke-width="1.15" stroke-linejoin="round" stroke-linecap="round">
    <!-- terrain rect -->
    <path d="M598.4 118.8 H610.6 L615 124.2 V127.4 H602.6 L598.4 122 Z M598.4 118.800 L602.6 124.2 H615 M602.6 124.2 V127.4"/>
    <path d="M602 120.600 H608.6 L610.8 122.6 H604.400 Z"/>
    <!-- elevation line -->
    <path d="M703.8 117.2 H716.8 L720.8 125 V128.600 H708 L703.8 121.4 Z M703.8 121.2 L708 125.200 H720.8"/>
    <path d="M705 118.2 C709 121.800 713 118.600 718.6 122.800 M717 118.2 C713.600 121.200 709 119.800 706.600 123.600 M706.2 121 C711 122.600 715 120.600 719.6 124"/>
    <!-- pit rect -->
    <path d="M809.4 118.800 H821.6 L826 124.2 V127.4 H813.6 L809.4 122 Z M809.4 118.800 L813.6 124.2 H826 M813.6 124.2 V127.4"/>
    <path d="M813 120.400 H819.6 L821.8 122.800 H815.400 Z M813.600 121.600 H820.400"/>
    <!-- terrain poly -->
    <path d="M598.4 176.600 H610.6 L615 182 V185.2 H605.400 M598.4 176.600 V180 L600 182.200 M598.4 176.600 L602.6 182 H615"/>
    <path d="M602 178.400 H608.6 L610.8 180.4 H604.400 Z"/>
    <path d="M601.6 182.800 L604.8 186.200 L601.600 189.600 L598.400 186.200 Z"/>
    <!-- elevation spline -->
    <path d="M703.8 176.2 H716.8 L720.8 184 V187.600 H708 L703.8 180.4 Z M703.8 180.2 L708 184.200 H720.8"/>
    <path d="M704.6 178.400 C709 177.400 713 179.400 717.800 178 M705.400 180.400 C710 179.600 714 181.600 718.800 180.200 M706.600 182.400 C711 181.800 715 183.600 719.800 182.200"/>
    <!-- pit poly -->
    <path d="M809.4 176.600 H821.6 L826 182 V185.2 H816.400 M809.4 176.600 V180 L811 182.200 M809.4 176.600 L813.6 182 H826"/>
    <path d="M813 178.200 H819.6 L821.8 180.600 H815.400 Z"/>
    <path d="M812.6 182.800 L815.8 186.200 L812.600 189.600 L809.400 186.200 Z"/>
    <!-- pathway -->
    <path d="M598.4 236.600 H610.6 L615 242 V245.4 H602.6 L598.4 240 Z M598.4 236.600 L602.6 242 H615 M602.6 242 V245.4"/>
    <path d="M603.400 241.800 C605 239.600 607.400 237.800 610.400 236.800 L612.600 239.200 C610 239.800 608.200 240.800 607 242 Z" fill="#fff"/>
    <!-- elevation point -->
    <path d="M703.8 240.200 L708 245 V247.400 H720.800 V244.800 L716.800 240.200 M703.8 240.200 V242.600 L708 247.400 M708 245 H720.800"/>
    <path d="M703.8 240.200 C708 240 710.600 237.600 711.600 233.800 C712.800 237.600 714.600 240 716.800 240.200 M711.600 233.800 L713.200 244.800"/>
  </g>
</svg>
<!-- mouse cursor -->
<svg width="16" height="22" style="left:725px;top:59px" viewBox="725 59 16 22">
  <path d="M726 59.8 V75.2 L728.4 73.2 L731.6 78.4 L734.4 77 L731.4 71.8 L737 71.4 Z" fill="#fff" stroke="#222" stroke-width="0.8" stroke-linejoin="round"/>
</svg>
</div>
</body>
</html>
